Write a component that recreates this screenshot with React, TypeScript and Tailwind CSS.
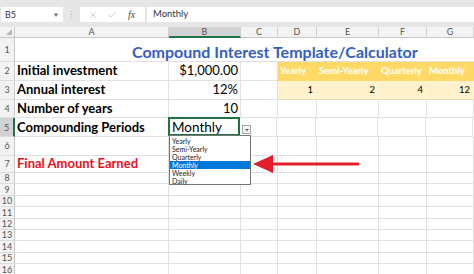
import { X, Check } from 'lucide-react';

const COLS = [
  { key: 'A', w: 'w-[154px]' },
  { key: 'B', w: 'w-[72px]' },
  { key: 'C', w: 'w-[37px]' },
  { key: 'D', w: 'w-[39px]' },
  { key: 'E', w: 'w-[62px]' },
  { key: 'F', w: 'w-[48px]' },
  { key: 'G', w: 'w-[47px]' },
];

const OPTIONS = ['Yearly', 'Semi-Yearly', 'Quarterly', 'Monthly', 'Weekly', 'Daily'];

const LABELS = ['Initial investment', 'Annual interest', 'Number of years', 'Compounding Periods'];
const VALUES = ['$1,000.00', '12%', '10', ''];

const PERIODS = [
  { name: 'Yearly', n: 1 },
  { name: 'Semi-Yearly', n: 2 },
  { name: 'Quarterly', n: 4 },
  { name: 'Monthly', n: 12 },
];

function RowHead({ n, h, active }: { n: number; h: string; active?: boolean }) {
  return (
    <div
      className={`w-[15px] shrink-0 ${h} flex items-center justify-center text-[9px] text-[#555] border-b border-[#dcdcdc] ${
        active ? 'bg-[#d2d2d2] border-r-2 border-r-[#217346]' : 'bg-[#f3f3f3] border-r border-r-[#c8c8c8]'
      }`}
    >
      {n}
    </div>
  );
}

function EmptyRow({ n, h }: { n: number; h: string }) {
  return (
    <div className="flex">
      <RowHead n={n} h={h} />
      {COLS.map(c => (
        <div key={c.key} className={`${c.w} ${h} shrink-0 border-r border-b border-[#e1e1e1]`} />
      ))}
    </div>
  );
}

export default function App() {
  return (
    <div className="w-[474px] h-[274px] overflow-hidden bg-white relative font-['Lato',sans-serif]">
      {/* Formula bar */}
      <div className="h-[27px] bg-[#e6e6e6] flex items-start pt-[7px] pl-[1px]">
        <div className="w-[62px] h-[15px] bg-white flex items-center justify-between px-[4px] text-[9px] text-[#333]">
          <span>B5</span>
          <span className="text-[6px] text-[#666]">▼</span>
        </div>
        <span className="w-[17px] text-center text-[9px] leading-[15px] text-[#aaa]">⋮</span>
        <div className="w-[65px] h-[15px] bg-white flex items-center pl-[8px] gap-[9px]">
          <X size={10} strokeWidth={1.5} className="text-[#b0b0b0]" />
          <Check size={10} strokeWidth={1.5} className="text-[#b0b0b0]" />
          <span className="font-['Liberation_Serif',serif] italic text-[10px] text-[#444] ml-[2px]">fx</span>
        </div>
        <div className="ml-[2px] flex-1 h-[15px] bg-white flex items-center pl-[6px] text-[9.5px] text-[#333]">
          Monthly
        </div>
      </div>

      {/* Column headers */}
      <div className="flex h-[11px]">
        <div className="w-[15px] shrink-0 bg-[#f3f3f3] border-r border-b border-[#c8c8c8] relative">
          <div className="absolute right-[2px] bottom-[2px] w-0 h-0 border-l-[6px] border-l-transparent border-b-[6px] border-b-[#b8b8b8]" />
        </div>
        {COLS.map(c => (
          <div
            key={c.key}
            className={`${c.w} shrink-0 flex items-center justify-center text-[9px] text-[#555] border-r border-[#d0d0d0] ${
              c.key === 'B' ? 'bg-[#d2d2d2] border-b-2 border-b-[#217346]' : 'bg-[#f3f3f3] border-b border-b-[#c8c8c8]'
            }`}
          >
            {c.key}
          </div>
        ))}
      </div>

      {/* Row 1 - title */}
      <div className="flex">
        <RowHead n={1} h="h-[24px]" />
        <div className="flex-1 h-[24px] border-b border-[#e1e1e1] flex items-end pb-[1px] pl-[117px] text-[16px] font-bold text-[#3460c0] leading-none">
          Compound Interest Template/Calculator
        </div>
      </div>

      {/* Rows 2-5 */}
      {LABELS.map((label, i) => (
        <div key={label} className="flex">
          <RowHead n={i + 2} h="h-[18.8px]" active={i === 3} />
          <div className="w-[154px] h-[18.8px] shrink-0 border-r border-b border-[#e1e1e1] flex items-center pl-[2px] text-[13px] font-bold text-black">
            {label}
          </div>
          {i === 3 ? (
            <div className="w-[72px] h-[18.8px] shrink-0 border-2 border-[#217346] flex items-center pl-[2px] text-[13.5px] text-black -ml-[1px] -mt-[1px]">
              Monthly
            </div>
          ) : (
            <div className="w-[72px] h-[18.8px] shrink-0 border-r border-b border-[#e1e1e1] flex items-center justify-end pr-[2px] text-[13px] text-black">
              {VALUES[i]}
            </div>
          )}
          <div className="w-[37px] h-[18.8px] shrink-0 border-r border-b border-[#e1e1e1]" />
          {PERIODS.map((p, j) => {
            const w = COLS[j + 3].w;
            if (i === 0)
              return (
                <div key={p.name} className={`${w} h-[18.8px] shrink-0 bg-[#ffd966] flex items-center pl-[2px] text-[9.5px] font-bold text-white whitespace-nowrap`}>
                  {p.name}
                </div>
              );
            if (i === 1)
              return (
                <div key={p.name} className={`${w} h-[18.8px] shrink-0 bg-[#fff2cc] border-b border-[#e6dcb8] flex items-center justify-end pr-[4px] text-[9.5px] text-black`}>
                  {p.n}
                </div>
              );
            return <div key={p.name} className={`${w} h-[18.8px] shrink-0 border-r border-b border-[#e1e1e1]`} />;
          })}
        </div>
      ))}

      {/* Row 6 */}
      <EmptyRow n={6} h="h-[18.8px]" />

      {/* Row 7 */}
      <div className="flex">
        <RowHead n={7} h="h-[17px]" />
        <div className="w-[154px] h-[17px] shrink-0 border-r border-b border-[#e1e1e1] flex items-center pl-[2px] text-[13px] font-bold text-[#e8101a] whitespace-nowrap">
          Final Amount Earned
        </div>
        {COLS.slice(1).map(c => (
          <div key={c.key} className={`${c.w} h-[17px] shrink-0 border-r border-b border-[#e1e1e1]`} />
        ))}
      </div>

      {[8, 9, 10, 11, 12, 13, 14, 15, 16].map(n => (
        <EmptyRow key={n} n={n} h="h-[11.4px]" />
      ))}

      {/* Dropdown button */}
      <div className="absolute left-[242px] top-[125px] w-[9px] h-[9px] bg-[#f0f0f0] border border-[#a8a8a8] flex items-center justify-center">
        <div className="w-0 h-0 border-l-[2px] border-r-[2px] border-t-[2px] border-l-transparent border-r-transparent border-t-[#555]" />
      </div>

      {/* Dropdown list */}
      <div className="absolute left-[169px] top-[135px] w-[82px] h-[50px] bg-white border border-[#767676] pt-[1px] text-[7px] leading-[8px] text-[#222]">
        {OPTIONS.map(o => (
          <div key={o} className={`pl-[2px] h-[8px] ${o === 'Monthly' ? 'bg-[#0078d7] text-white' : ''}`}>
            {o}
          </div>
        ))}
      </div>

      {/* Red arrow */}
      <svg className="absolute left-[252px] top-[154px]" width="110" height="20" viewBox="0 0 110 20">
        <line x1="18" y1="10" x2="106" y2="10" stroke="#e3202a" strokeWidth="3" strokeLinecap="round" />
        <polygon points="1,10 21,1 21,19" fill="#e3202a" />
      </svg>
    </div>
  );
}
